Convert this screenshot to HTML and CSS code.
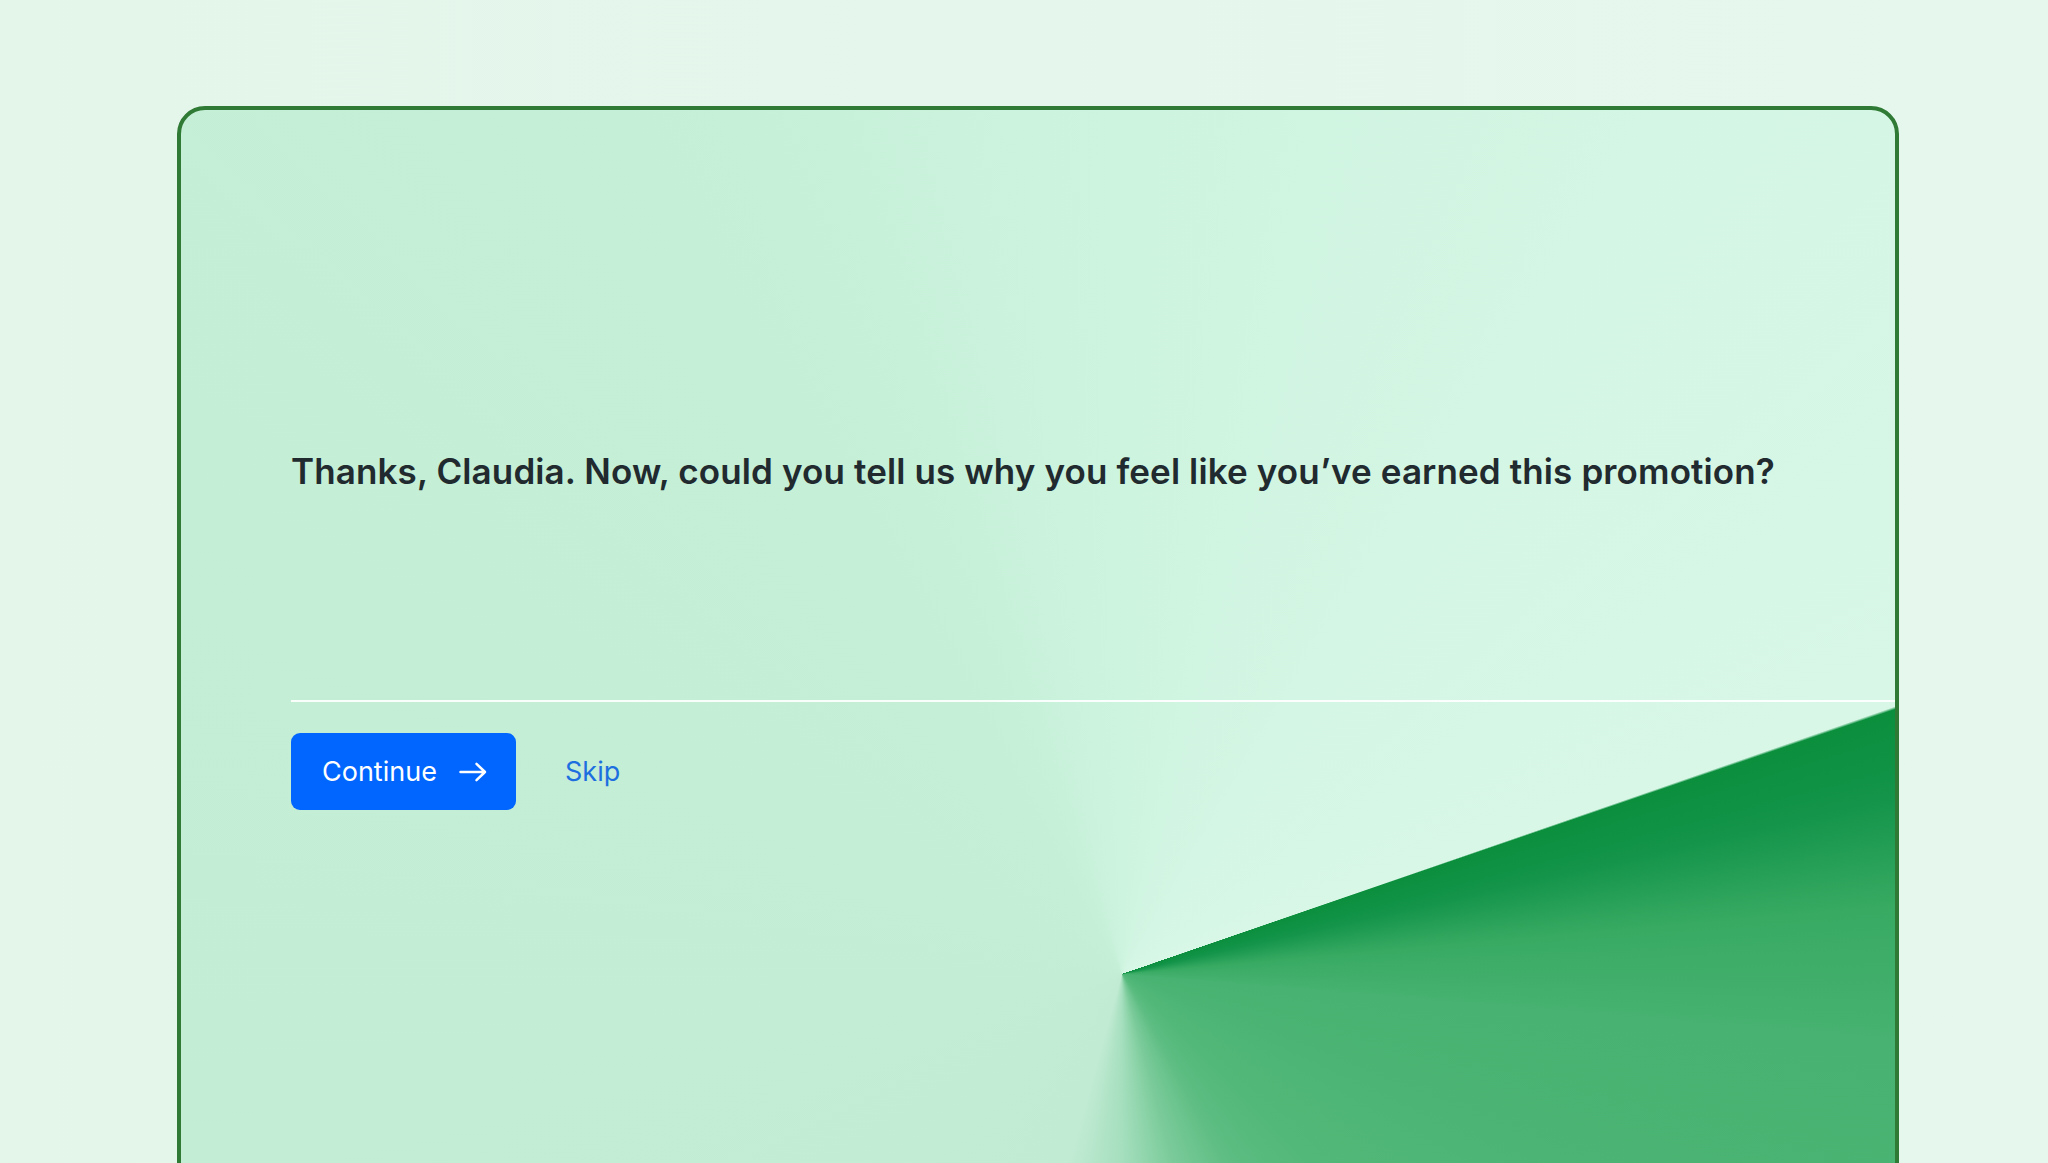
FILE: index.html
```html
<!DOCTYPE html>
<html lang="en">
<head>
<meta charset="utf-8">
<title>Promotion survey</title>
<link rel="stylesheet" href="styles.css">
</head>
<body>
  <main class="card">
    <h1 class="question">Thanks, Claudia. Now, could you tell us why you feel like you’ve earned this promotion?</h1>
    <hr class="divider">
    <div class="actions">
      <button class="btn-continue" type="button">
        <span>Continue</span>
        <svg class="arrow" width="28" height="20" viewBox="0 0 28 20" aria-hidden="true">
          <path d="M1.5 10 H26 M17.5 1.8 L26 10 L17.5 18.2" fill="none" stroke="#fff" stroke-width="2.5" stroke-linecap="round" stroke-linejoin="round"/>
        </svg>
      </button>
      <a class="skip" href="#">Skip</a>
    </div>
  </main>
</body>
</html>
```
FILE: styles.css
```css
html, body {
  margin: 0;
  padding: 0;
  height: 100%;
  overflow: hidden;
}

body {
  background: linear-gradient(90deg, #e4f6ea 0%, #e6f8ee 100%);
  font-family: Inter, "Noto Sans", "Liberation Sans", sans-serif;
}

.card {
  box-sizing: border-box;
  width: 1722px;
  height: 1200px;
  margin: 106px 0 0 177px;
  border: 4px solid #2f7a34;
  border-radius: 28px;
  padding: 339px 0 0 110px;
  background: conic-gradient(
    from 0deg at 941px 864px,
    #cdf4df 0deg,
    #d4f6e4 32deg,
    #d8f7e7 70.9deg,
    #0b8f3d 71.1deg,
    #13944a 77deg,
    #38aa62 85deg,
    #47b271 95deg,
    #52b879 135deg,
    #5dbd82 150deg,
    #7bcb9a 165deg,
    #a5dfbe 180deg,
    #c2ebd4 196deg,
    #c5efd7 330deg,
    #cdf4df 360deg
  );
}

.question {
  margin: 0;
  font-size: 35px;
  line-height: 45px;
  font-weight: 600;
  color: #212a2e;
  letter-spacing: 0.12px;
  white-space: nowrap;
}

.divider {
  margin: 206px 0 0 0;
  border: 0;
  height: 2px;
  background: rgba(255, 255, 255, 0.9);
}

.actions {
  display: flex;
  align-items: center;
  gap: 49px;
  margin-top: 31px;
}

.btn-continue {
  display: flex;
  align-items: center;
  gap: 22px;
  height: 77px;
  width: 225px;
  box-sizing: border-box;
  padding: 0 0 0 31px;
  border: 0;
  border-radius: 9px;
  background: #0066ff;
  color: #ffffff;
  font-family: inherit;
  font-size: 27px;
  font-weight: 400;
  cursor: pointer;
}

.arrow {
  display: block;
  flex: none;
}

.skip {
  color: #1d6fe0;
  font-size: 27px;
  text-decoration: none;
}
```
